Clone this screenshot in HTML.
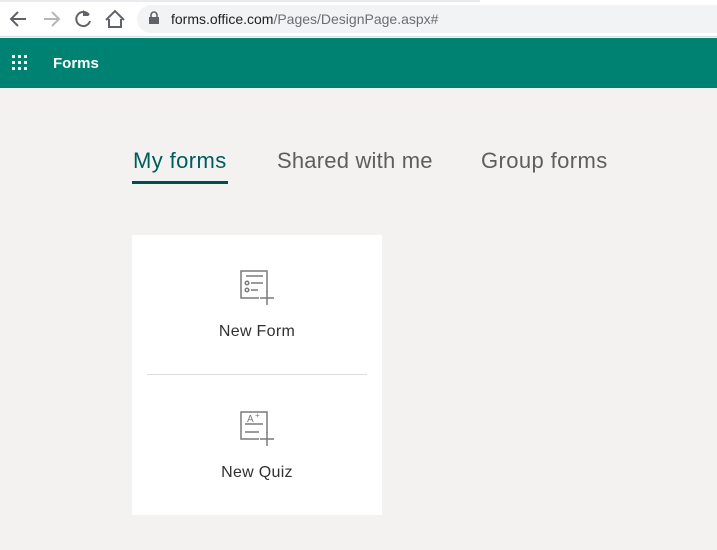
<!DOCTYPE html>
<html><head><meta charset="utf-8"><style>
*{margin:0;padding:0;box-sizing:border-box}
body{width:717px;height:550px;overflow:hidden;background:#f3f2f1;font-family:"Liberation Sans",sans-serif;position:relative}
.abs{position:absolute}
.tab{font-size:22px;letter-spacing:0.4px}
</style></head><body>
<div class="abs" style="left:0;top:0;width:717px;height:37px;background:#fff;border-bottom:1px solid #dadce0"></div>
<div class="abs" style="left:0;top:0;width:480px;height:2px;background:#e8eaed"></div>
<svg class="abs" style="left:0;top:0" width="140" height="37">
<g fill="none" stroke-width="2">
<path d="M26 19H12M18 12l-7 7 7 7" stroke="#5f6368"/>
<path d="M44 19h14M52 12l7 7-7 7" stroke="#b5b7ba"/>
<path d="M89 15a7 7 0 1 0 1 6" stroke="#5f6368"/>
<path d="M109 19v8h12v-8M106 20l9-9 9 9" stroke="#5f6368"/>
</g>
<path d="M83 10v6h6z" fill="#5f6368"/>
</svg>
<div class="abs" style="left:137px;top:5px;width:600px;height:28px;border-radius:14px;background:#f1f3f4"></div>
<svg class="abs" style="left:148px;top:11px" width="12" height="14"><rect x="1" y="6" width="10" height="7" fill="#5f6368"/><path d="M3 6V4a3 3 0 0 1 6 0v2" stroke="#5f6368" stroke-width="1.6" fill="none"/></svg>
<div class="abs" style="left:171px;top:11px;font-size:14px;color:#202124">forms.office.com<span style="color:#6b6e72">/Pages/DesignPage.aspx#</span></div>
<div class="abs" style="left:0;top:38px;width:717px;height:50px;background:#008272"></div>
<svg class="abs" style="left:12px;top:55px" width="18" height="16" fill="#fff">
<rect x="0" y="0" width="3" height="3"/><rect x="6" y="0" width="3" height="3"/><rect x="12" y="0" width="3" height="3"/>
<rect x="0" y="6" width="3" height="3"/><rect x="6" y="6" width="3" height="3"/><rect x="12" y="6" width="3" height="3"/>
<rect x="0" y="12" width="3" height="3"/><rect x="6" y="12" width="3" height="3"/><rect x="12" y="12" width="3" height="3"/>
</svg>
<div class="abs" style="left:53px;top:55px;font-size:15px;font-weight:bold;color:#fff">Forms</div>
<div class="abs tab" style="left:133px;top:148px;color:#005b5c">My forms</div>
<div class="abs" style="left:132px;top:181px;width:96px;height:3px;background:#004e50"></div>
<div class="abs tab" style="left:277px;top:148px;color:#605e5c;letter-spacing:0.2px">Shared with me</div>
<div class="abs tab" style="left:481px;top:148px;color:#605e5c">Group forms</div>
<div class="abs" style="left:132px;top:235px;width:250px;height:280px;background:#fff"></div>
<div class="abs" style="left:147px;top:374px;width:220px;height:1px;background:#dedede"></div>
<svg class="abs" style="left:238px;top:268px" width="40" height="40" fill="none" stroke="#7a7a7a" stroke-width="1.5">
<path d="M29 24V3H3v27h18"/><path d="M8 8h17M13 15h12M13 22h7"/><circle cx="9" cy="15" r="1.8"/><circle cx="9" cy="22" r="1.8"/><path d="M29 23v14M22 30h14"/>
</svg>
<div class="abs" style="left:132px;top:323px;width:250px;text-align:center;font-size:16px;color:#323130;letter-spacing:0.3px">New Form</div>
<svg class="abs" style="left:238px;top:409px" width="40" height="40" fill="none" stroke="#7a7a7a" stroke-width="1.5">
<path d="M29 24V3H3v27h18"/><path d="M7 15h18M7 23h14"/><path d="M29 23v14M22 30h14"/>
<text x="9" y="13" font-size="10" fill="#7a7a7a" stroke="none" font-family="Liberation Sans">A</text><text x="17" y="9" font-size="8" fill="#7a7a7a" stroke="none" font-family="Liberation Sans">+</text>
</svg>
<div class="abs" style="left:132px;top:464px;width:250px;text-align:center;font-size:16px;color:#323130;letter-spacing:0.3px">New Quiz</div>
</body></html>
